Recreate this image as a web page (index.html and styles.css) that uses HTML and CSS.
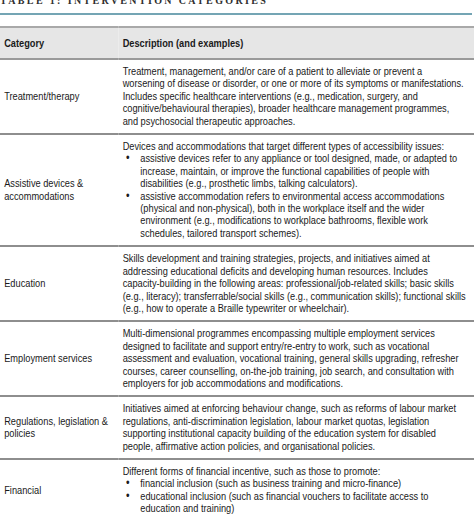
FILE: index.html
```html
<!DOCTYPE html>
<html>
<head>
<meta charset="utf-8">
<link rel="stylesheet" href="styles.css">
</head>
<body>
<div class="page">
  <div class="title">TABLE 1: INTERVENTION CATEGORIES</div>
  <div class="rule"></div>
  <table class="tbl">
    <thead>
      <tr class="head">
        <th class="cat">Category</th>
        <th class="desc">Description (and examples)</th>
      </tr>
    </thead>
    <tbody>
      <tr>
        <td class="cat">Treatment/therapy</td>
        <td class="desc">Treatment, management, and/or care of a patient to alleviate or prevent a<br>worsening of disease or disorder, or one or more of its symptoms or manifestations.<br>Includes specific healthcare interventions (e.g., medication, surgery, and<br>cognitive/behavioural therapies), broader healthcare management programmes,<br>and psychosocial therapeutic approaches.</td>
      </tr>
      <tr>
        <td class="cat">Assistive devices &amp;<br>accommodations</td>
        <td class="desc">Devices and accommodations that target different types of accessibility issues:
          <ul class="bullets">
            <li>assistive devices refer to any appliance or tool designed, made, or adapted to<br>increase, maintain, or improve the functional capabilities of people with<br>disabilities (e.g., prosthetic limbs, talking calculators).</li>
            <li>assistive accommodation refers to environmental access accommodations<br>(physical and non-physical), both in the workplace itself and the wider<br>environment (e.g., modifications to workplace bathrooms, flexible work<br>schedules, tailored transport schemes).</li>
          </ul>
        </td>
      </tr>
      <tr>
        <td class="cat">Education</td>
        <td class="desc">Skills development and training strategies, projects, and initiatives aimed at<br>addressing educational deficits and developing human resources. Includes<br>capacity-building in the following areas: professional/job-related skills; basic skills<br>(e.g., literacy); transferrable/social skills (e.g., communication skills); functional skills<br>(e.g., how to operate a Braille typewriter or wheelchair).</td>
      </tr>
      <tr>
        <td class="cat">Employment services</td>
        <td class="desc">Multi-dimensional programmes encompassing multiple employment services<br>designed to facilitate and support entry/re-entry to work, such as vocational<br>assessment and evaluation, vocational training, general skills upgrading, refresher<br>courses, career counselling, on-the-job training, job search, and consultation with<br>employers for job accommodations and modifications.</td>
      </tr>
      <tr>
        <td class="cat">Regulations, legislation &amp;<br>policies</td>
        <td class="desc">Initiatives aimed at enforcing behaviour change, such as reforms of labour market<br>regulations, anti-discrimination legislation, labour market quotas, legislation<br>supporting institutional capacity building of the education system for disabled<br>people, affirmative action policies, and organisational policies.</td>
      </tr>
      <tr>
        <td class="cat">Financial</td>
        <td class="desc">Different forms of financial incentive, such as those to promote:
          <ul class="bullets">
            <li>financial inclusion (such as business training and micro-finance)</li>
            <li>educational inclusion (such as financial vouchers to facilitate access to<br>education and training)</li>
          </ul>
        </td>
      </tr>
    </tbody>
  </table>
</div>
</body>
</html>
```
FILE: styles.css
```css
html, body {
  margin: 0;
  padding: 0;
  background: #ffffff;
}
.page {
  width: 474px;
  height: 515px;
  overflow: hidden;
}
.title {
  margin-top: -5px;
  height: 11px;
  line-height: 11px;
  font-family: "Liberation Serif", "Times New Roman", serif;
  font-weight: bold;
  font-size: 10px;
  letter-spacing: 2.35px;
  color: #2e2e2e;
  white-space: nowrap;
}
.rule {
  margin-top: 7px;
  width: 472px;
  height: 2px;
  background: #74a5b4;
}
.tbl {
  margin-top: 11px;
  width: 565px;
  border-collapse: collapse;
  transform: scaleX(0.84);
  transform-origin: 0 0;
  font-family: "Liberation Sans", Arial, sans-serif;
  font-size: 11px;
  line-height: 12.4px;
  color: #1a1a1a;
}
.tbl th, .tbl td {
  text-align: left;
  white-space: nowrap;
}
.head th {
  background: #e6e6e6;
  border-top: 2px solid #a9a9a9;
  border-bottom: 2px solid #9a9a9a;
  font-weight: bold;
  height: 30px;
  padding: 0 5px;
  vertical-align: middle;
}
.tbl td {
  padding: 5px 5px 6px 5px;
  border-bottom: 2px solid #8e8e8e;
  vertical-align: top;
}
.tbl td.cat {
  vertical-align: middle;
}
.cat {
  width: 131px;
}
.bullets {
  margin: 0;
  padding: 0 0 0 21px;
  list-style: none;
}
.bullets li {
  position: relative;
}
.bullets li::before {
  content: "\2022";
  position: absolute;
  left: -17px;
  top: 0;
  font-size: 12px;
}
```
